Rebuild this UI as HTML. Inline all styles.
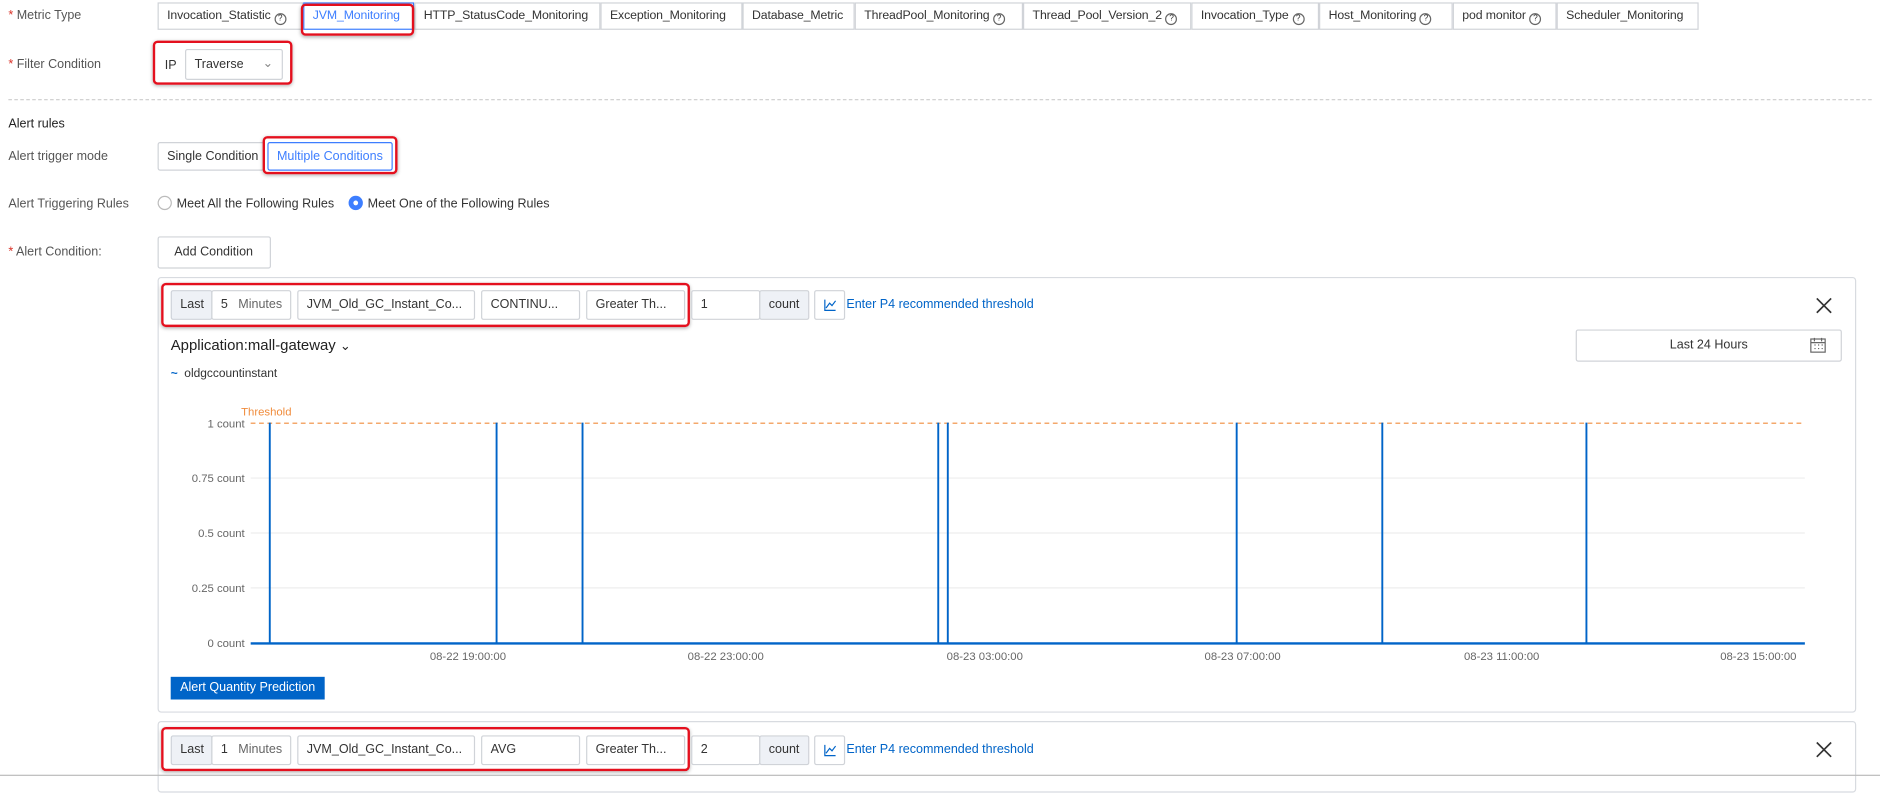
<!DOCTYPE html>
<html><head><meta charset="utf-8"><style>
*{box-sizing:border-box;margin:0;padding:0}
html,body{width:1880px;height:776px;overflow:hidden;background:#fff}
#w{position:absolute;left:0;top:0;width:1575px;height:650px;transform:scale(1.1937);transform-origin:0 0;font-family:"Liberation Sans",sans-serif;font-size:10.5px;color:#333}
.a{position:absolute;white-space:nowrap}
.lbl{position:absolute;left:7px;font-size:10.5px;color:#555}
.req:before{content:"* ";color:#d93026}
.tab{position:absolute;top:2px;height:23px;border:1px solid #d0d3d8;line-height:21px;padding-left:7px;font-size:10.3px;letter-spacing:-0.1px;color:#333;background:#fff;overflow:hidden}
.q{display:inline-block;width:10px;height:10px;border:1px solid #666;border-radius:50%;font-size:7px;line-height:8px;text-align:center;margin-left:3px;vertical-align:-1px}
.box{position:absolute;border:1px solid #d0d3d8;border-radius:2px;background:#fff;line-height:23px;font-size:10.5px;padding-left:7px;white-space:nowrap;overflow:hidden}
.red{position:absolute;border:2px solid #e4101e;border-radius:4px;box-shadow:0 1px 3px rgba(0,0,0,.3)}
.card{position:absolute;left:132px;width:1423px;border:1px solid #d8dbe0;border-radius:3px;background:#fff}
.gray{background:#eef1f6}
.link{color:#0064c8}
</style></head><body><div id="w">
<div class="lbl req" style="top:7px">Metric Type</div>
<div class="tab" style="left:132px;width:122px">Invocation_Statistic<span class="q">?</span></div>
<div class="tab" style="left:254px;width:93px;color:#3d7eff;border-color:#3d7eff">JVM_Monitoring</div>
<div class="tab" style="left:347px;width:156px">HTTP_StatusCode_Monitoring</div>
<div class="tab" style="left:503px;width:119px">Exception_Monitoring</div>
<div class="tab" style="left:622px;width:94px">Database_Metric</div>
<div class="tab" style="left:716px;width:141px">ThreadPool_Monitoring<span class="q">?</span></div>
<div class="tab" style="left:857px;width:141px">Thread_Pool_Version_2<span class="q">?</span></div>
<div class="tab" style="left:998px;width:107px">Invocation_Type<span class="q">?</span></div>
<div class="tab" style="left:1105px;width:112px">Host_Monitoring<span class="q">?</span></div>
<div class="tab" style="left:1217px;width:87px">pod monitor<span class="q">?</span></div>
<div class="tab" style="left:1304px;width:119px">Scheduler_Monitoring</div>
<div class="red" style="left:252px;top:3px;width:95px;height:27px"></div>

<div class="lbl req" style="top:48px">Filter Condition</div>
<div class="a" style="left:138px;top:49px">IP</div>
<div class="box" style="left:155px;top:41px;width:82px;height:26px;line-height:24px">Traverse<span style="position:absolute;left:64px;top:-1px;color:#888">&#8964;</span></div>
<div class="red" style="left:128px;top:34px;width:117px;height:37px"></div>
<div class="a" style="left:7px;top:83px;width:1561px;border-top:1px dashed #ccc"></div>

<div class="a" style="left:7px;top:98px;color:#222">Alert rules</div>
<div class="lbl" style="top:125px">Alert trigger mode</div>
<div class="box" style="left:132px;top:119px;width:90px;height:24px;line-height:22px">Single Condition</div>
<div class="box" style="left:224px;top:119px;width:105px;height:24px;line-height:22px;color:#3d7eff;border-color:#3d7eff">Multiple Conditions</div>
<div class="red" style="left:220px;top:114px;width:113px;height:32px"></div>

<div class="lbl" style="top:165px">Alert Triggering Rules</div>
<div class="a" style="left:132px;top:164px;width:12px;height:12px;border:1px solid #bbb;border-radius:50%"></div>
<div class="a" style="left:148px;top:165px">Meet All the Following Rules</div>
<div class="a" style="left:292px;top:164px;width:12px;height:12px;background:#3d7eff;border-radius:50%"><div style="margin:4px;width:4px;height:4px;background:#fff;border-radius:50%"></div></div>
<div class="a" style="left:308px;top:165px">Meet One of the Following Rules</div>

<div class="lbl req" style="top:205px">Alert Condition:</div>
<div class="box" style="left:132px;top:198px;width:95px;height:27px;line-height:25px;padding-left:13px">Add Condition</div>

<div class="card" style="top:232px;height:365px"></div>
<div class="box gray" style="left:143px;top:243px;width:35px;height:25px;border-color:#cfd3da">Last</div>
<div class="box" style="left:177px;top:243px;width:67px;height:25px">5 &nbsp;&nbsp;<span style="color:#666">Minutes</span></div>
<div class="box" style="left:249px;top:243px;width:149px;height:25px">JVM_Old_GC_Instant_Co...</div>
<div class="box" style="left:403px;top:243px;width:83px;height:25px">CONTINU...</div>
<div class="box" style="left:491px;top:243px;width:83px;height:25px">Greater Th...</div>
<div class="red" style="left:135px;top:237px;width:443px;height:37px"></div>
<div class="box" style="left:579px;top:243px;width:58px;height:25px">1</div>
<div class="box gray" style="left:636px;top:243px;width:42px;height:25px">count</div>
<div class="box" style="left:682px;top:243px;width:26px;height:25px;padding:0"><svg width="24" height="23" viewBox="0 0 24 23"><path d="M8 7v9h9M9 14l3-4 2 2 3-4" fill="none" stroke="#0064c8" stroke-width="1"/></svg></div>
<div class="a link" style="left:709px;top:249px">Enter P4 recommended threshold</div>
<svg class="a" style="left:1520px;top:248px" width="16" height="16"><path d="M2 2L14 14M14 2L2 14" stroke="#333" stroke-width="1.4"/></svg>
<div class="a" style="left:143px;top:282px;font-size:12.5px;color:#222">Application:mall-gateway <span style="font-size:11px">&#8964;</span></div>
<div class="box" style="left:1320px;top:276px;width:223px;height:27px;line-height:25px;padding:0;text-align:center">Last 24 Hours</div>
<svg class="a" style="left:1516px;top:282px" width="14" height="14"><rect x="1" y="2" width="12" height="11" fill="none" stroke="#666"/><path d="M1 5h12M4 1v3M10 1v3" stroke="#666"/><path d="M4 7h1M7 7h1M10 7h1M4 10h1M7 10h1M10 10h1" stroke="#666"/></svg>
<div class="a" style="left:143px;top:308px;font-size:10px"><span style="color:#0064c8;font-weight:bold">~</span>&nbsp; oldgccountinstant</div>

<svg class="a" style="left:132px;top:330px" width="1400" height="230" font-family="Liberation Sans" font-size="9.5" fill="#666">
<g stroke="#eee"><line x1="78" y1="70.5" x2="1380" y2="70.5"/><line x1="78" y1="116.5" x2="1380" y2="116.5"/><line x1="78" y1="162.5" x2="1380" y2="162.5"/></g>
<line x1="78" y1="24.5" x2="1380" y2="24.5" stroke="#f08c3c" stroke-dasharray="4,3"/>
<text x="70" y="18" fill="#f08c3c">Threshold</text>
<g text-anchor="end"><text x="73" y="28">1 count</text><text x="73" y="74">0.75 count</text><text x="73" y="120">0.5 count</text><text x="73" y="166">0.25 count</text><text x="73" y="212">0 count</text></g>
<g stroke="#0064c8" stroke-width="2"><line x1="78" y1="209" x2="1380" y2="209"/>
<path d="M94 209V24M284 209V24M356 209V24M654 209V24M662 209V24M904 209V24M1026 209V24M1197 209V24" stroke-width="1.6"/></g>
<g text-anchor="middle"><text x="260" y="223">08-22 19:00:00</text><text x="476" y="223">08-22 23:00:00</text><text x="693" y="223">08-23 03:00:00</text><text x="909" y="223">08-23 07:00:00</text><text x="1126" y="223">08-23 11:00:00</text><text x="1341" y="223">08-23 15:00:00</text></g>
</svg>
<div class="a" style="left:143px;top:567px;width:129px;height:19px;background:#0064c8;color:#fff;line-height:19px;text-align:center;font-size:10.5px">Alert Quantity Prediction</div>

<div class="card" style="top:604px;height:60px"></div>
<div class="box gray" style="left:143px;top:616px;width:35px;height:25px;border-color:#cfd3da">Last</div>
<div class="box" style="left:177px;top:616px;width:67px;height:25px">1 &nbsp;&nbsp;<span style="color:#666">Minutes</span></div>
<div class="box" style="left:249px;top:616px;width:149px;height:25px">JVM_Old_GC_Instant_Co...</div>
<div class="box" style="left:403px;top:616px;width:83px;height:25px">AVG</div>
<div class="box" style="left:491px;top:616px;width:83px;height:25px">Greater Th...</div>
<div class="red" style="left:135px;top:609px;width:443px;height:37px"></div>
<div class="box" style="left:579px;top:616px;width:58px;height:25px">2</div>
<div class="box gray" style="left:636px;top:616px;width:42px;height:25px">count</div>
<div class="box" style="left:682px;top:616px;width:26px;height:25px;padding:0"><svg width="24" height="23" viewBox="0 0 24 23"><path d="M8 7v9h9M9 14l3-4 2 2 3-4" fill="none" stroke="#0064c8" stroke-width="1"/></svg></div>
<div class="a link" style="left:709px;top:622px">Enter P4 recommended threshold</div>
<svg class="a" style="left:1520px;top:620px" width="16" height="16"><path d="M2 2L14 14M14 2L2 14" stroke="#333" stroke-width="1.4"/></svg>
<div class="a" style="left:0;top:648.5px;width:1575px;border-top:1px solid #bbb"></div>
</div></body></html>
